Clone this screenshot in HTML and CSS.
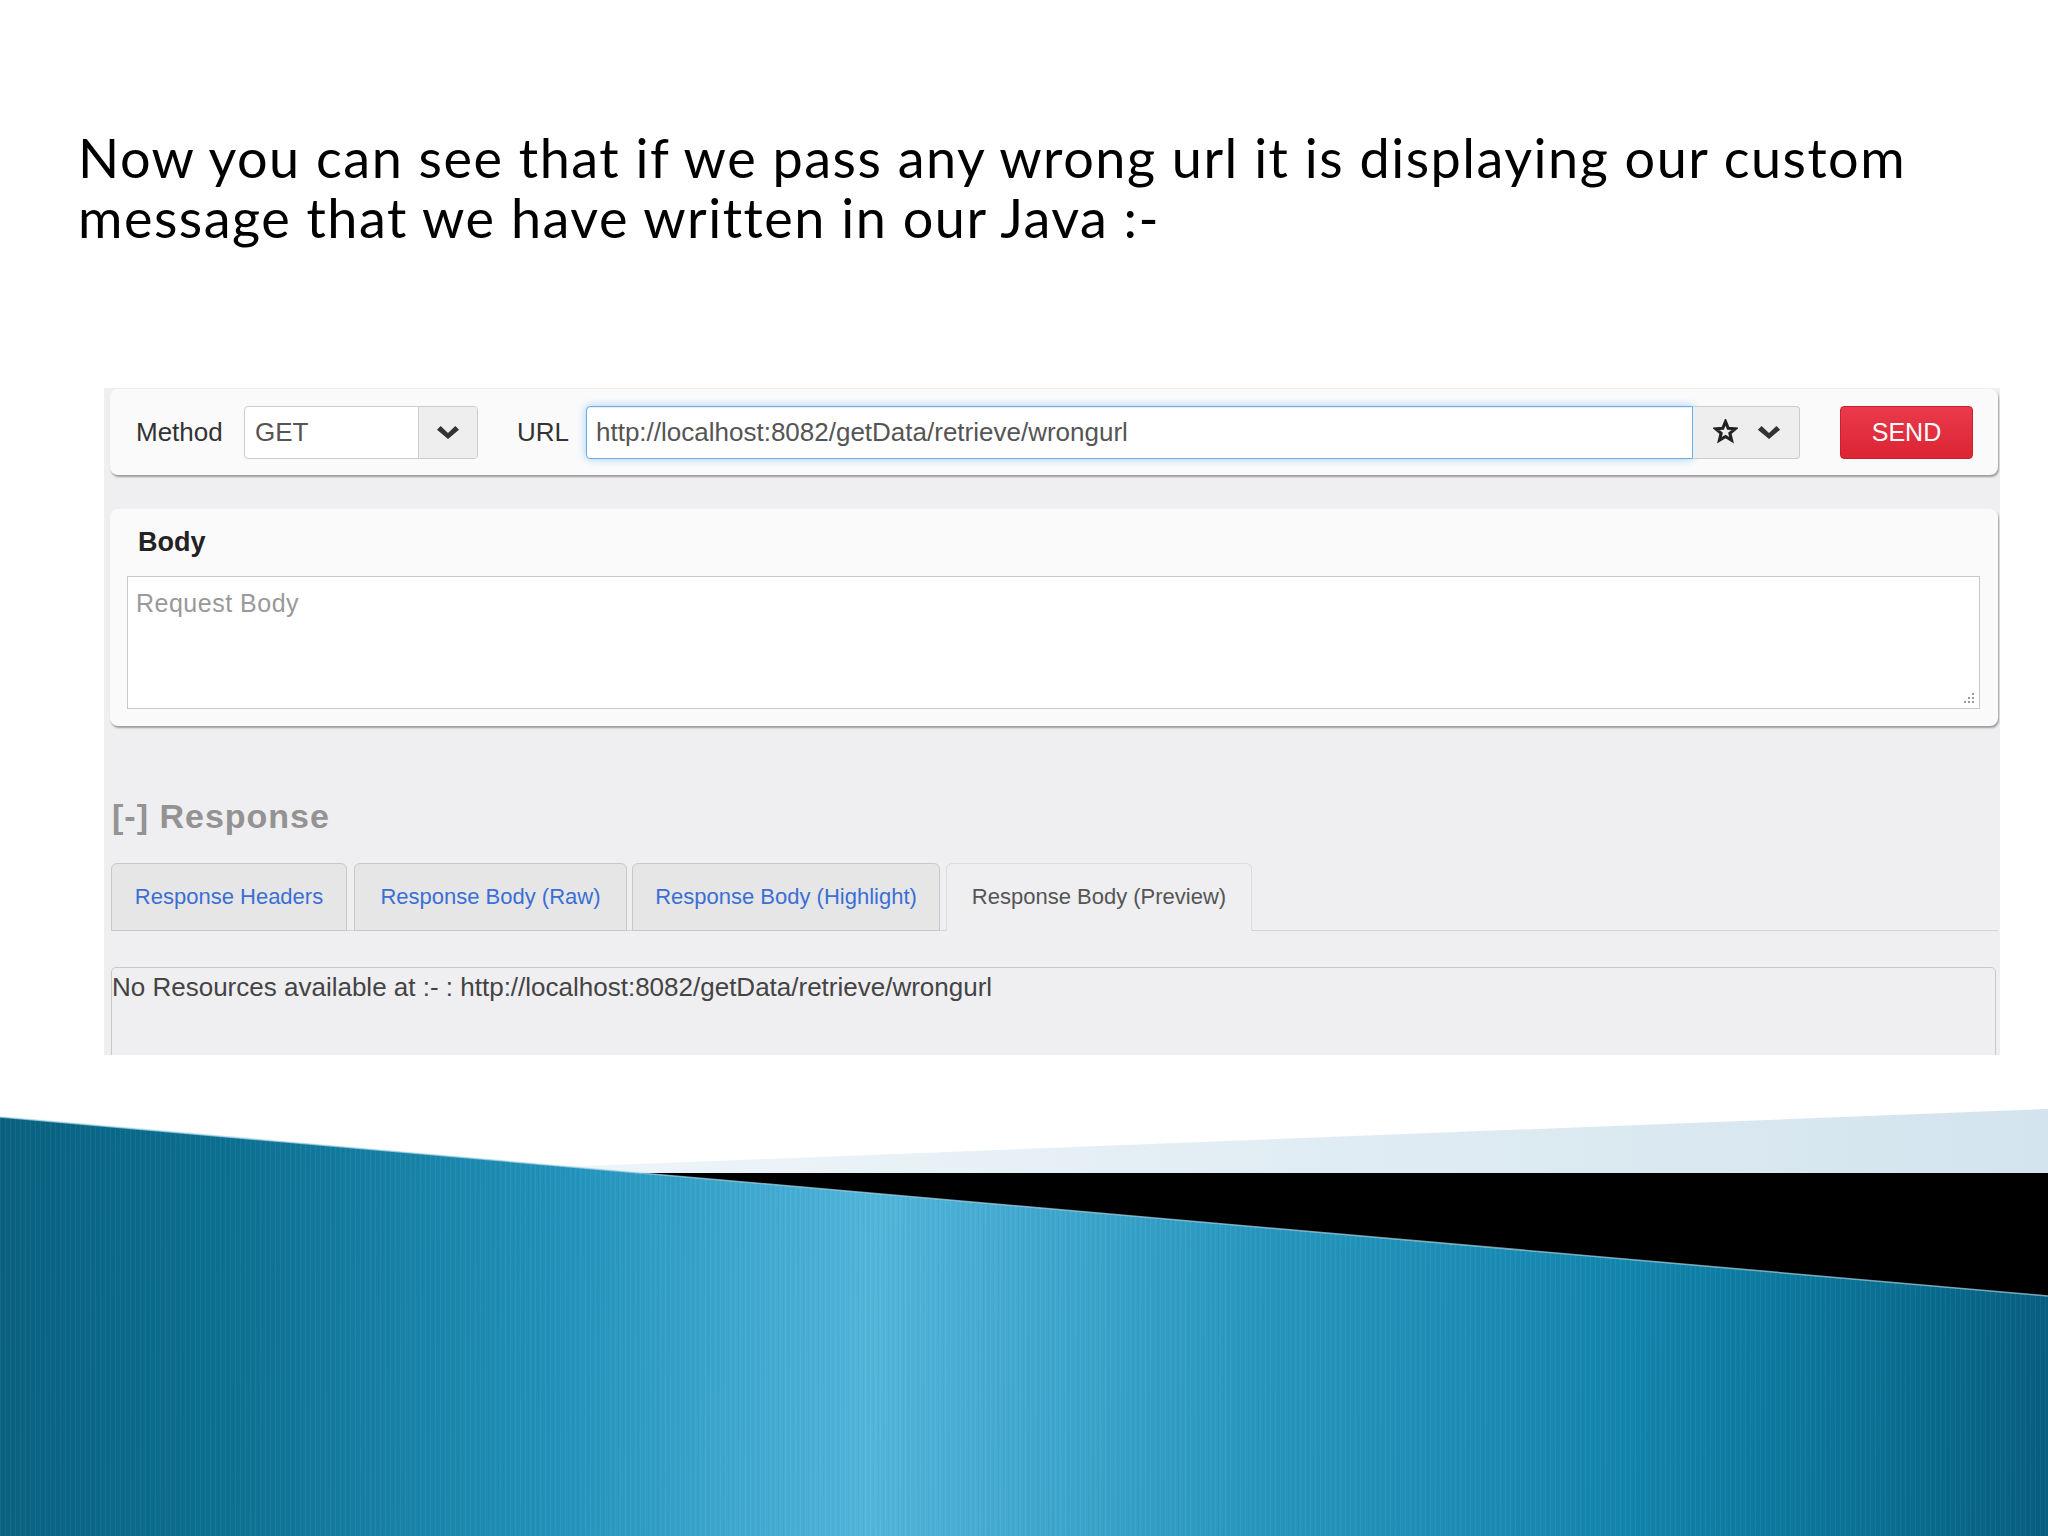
FILE: index.html
```html
<!DOCTYPE html>
<html>
<head>
<meta charset="utf-8">
<link rel="stylesheet" href="styles.css">
</head>
<body>
<div class="slide">
  <h1 class="title">Now you can see that if we pass any wrong url it is displaying our custom<br>message that we have written in our Java :-</h1>
  <div class="shot">
    <div class="card reqbar">
      <span class="lbl method">Method</span>
      <div class="select">
        <span class="val">GET</span>
        <span class="caret"><svg class="chev" width="22" height="13" viewBox="0 0 24 14"><polygon points="0,4 4,0 12,7.5 20,0 24,4 12,14" fill="#333"/></svg></span>
      </div>
      <span class="lbl url">URL</span>
      <div class="urlgroup">
        <div class="urlinput">http://localhost:8082/getData/retrieve/wrongurl</div>
        <div class="addon">
          <svg class="star" width="25" height="25" viewBox="0 0 24 24"><polygon points="12,2.6 14.6,8.9 21.4,9.4 16.2,13.8 17.8,20.4 12,16.8 6.2,20.4 7.8,13.8 2.6,9.4 9.4,8.9" fill="none" stroke="#222" stroke-width="3" stroke-linejoin="miter"/></svg>
          <svg class="chev2" width="24" height="13" viewBox="0 0 24 14"><polygon points="0,4 4,0 12,7.5 20,0 24,4 12,14" fill="#333"/></svg>
        </div>
      </div>
      <button class="send">SEND</button>
    </div>
    <div class="card bodycard">
      <div class="bodytitle">Body</div>
      <div class="textarea">
        <span class="ph">Request Body</span>
        <svg class="grip" width="12" height="12" viewBox="0 0 12 12"><g fill="#999"><rect x="9" y="1" width="2" height="2"/><rect x="9" y="5" width="2" height="2"/><rect x="5" y="5" width="2" height="2"/><rect x="9" y="9" width="2" height="2"/><rect x="5" y="9" width="2" height="2"/><rect x="1" y="9" width="2" height="2"/></g></svg>
      </div>
    </div>
    <h2 class="resp-h">[-] Response</h2>
    <div class="tabs">
      <div class="tab t1">Response Headers</div>
      <div class="tab t2">Response Body (Raw)</div>
      <div class="tab t3">Response Body (Highlight)</div>
      <div class="tab t4 active">Response Body (Preview)</div>
    </div>
    <div class="respbox">No Resources available at :- : http://localhost:8082/getData/retrieve/wrongurl</div>
  </div>
  <svg class="deco" width="2048" height="436" viewBox="0 0 2048 436">
    <defs>
      <linearGradient id="lb" x1="0" x2="1" y1="0" y2="0">
        <stop offset="0" stop-color="#eef5f9"/>
        <stop offset="1" stop-color="#d3e4ee"/>
      </linearGradient>
      <linearGradient id="bl" gradientUnits="userSpaceOnUse" x1="0" y1="0" x2="2048" y2="60">
        <stop offset="0" stop-color="#09617f"/>
        <stop offset="0.12" stop-color="#0d7193"/>
        <stop offset="0.28" stop-color="#2393bb"/>
        <stop offset="0.38" stop-color="#43abd1"/>
        <stop offset="0.43" stop-color="#52b5da"/>
        <stop offset="0.5" stop-color="#42a9cf"/>
        <stop offset="0.62" stop-color="#2796bd"/>
        <stop offset="0.8" stop-color="#1285ac"/>
        <stop offset="0.92" stop-color="#0a7094"/>
        <stop offset="1" stop-color="#075f80"/>
      </linearGradient>
      <pattern id="brush" width="5" height="20" patternUnits="userSpaceOnUse">
        <rect x="0" y="0" width="1" height="20" fill="#ffffff" opacity="0.05"/>
        <rect x="3" y="0" width="1" height="20" fill="#003040" opacity="0.04"/>
      </pattern>
    </defs>
    <polygon points="560,67 2048,9 2048,74 560,74" fill="url(#lb)"/>
    <polygon points="600,73 2048,73 2048,210 600,210" fill="#000"/>
    <polygon points="0,17 2048,196 2048,436 0,436" fill="url(#bl)"/>
    <polygon points="0,17 2048,196 2048,436 0,436" fill="url(#brush)"/>
    <line x1="0" y1="17" x2="2048" y2="196" stroke="#a8d8ea" stroke-width="1.5" opacity="0.7"/>
  </svg>
</div>
</body>
</html>
```
FILE: styles.css
```css
html, body {
  margin: 0;
  padding: 0;
  width: 2048px;
  height: 1536px;
  overflow: hidden;
  background: #ffffff;
}

.slide {
  width: 2048px;
  height: 1536px;
  overflow: hidden;
}

.title {
  margin: 0;
  padding: 128px 0 0 78px;
  font-family: Lato, "Open Sans", sans-serif;
  font-weight: 400;
  font-size: 54px;
  line-height: 60px;
  letter-spacing: 1.5px;
  color: #000;
  white-space: nowrap;
}

.shot {
  margin: 140px 0 0 104px;
  width: 1896px;
  height: 667px;
  box-sizing: border-box;
  padding: 1px 2px 0 6px;
  background: #efeef1;
  overflow: hidden;
  font-family: "Liberation Sans", Arial, sans-serif;
}

.card {
  background: #fafafb;
  border-radius: 8px;
  box-shadow: 1px 2px 2px rgba(0, 0, 0, 0.35);
}

.reqbar {
  display: flex;
  align-items: center;
  height: 86px;
  box-sizing: border-box;
  padding: 0 25px 0 26px;
}

.lbl {
  font-size: 26px;
  color: #333;
}

.method {
  width: 108px;
}

.select {
  width: 234px;
  height: 53px;
  box-sizing: border-box;
  border: 1px solid #ccc;
  border-radius: 4px;
  background: #fff;
  display: flex;
}

.select .val {
  flex: 1;
  padding-left: 10px;
  font-size: 26px;
  line-height: 51px;
  color: #555;
}

.select .caret {
  width: 58px;
  background: #eee;
  border-left: 1px solid #ccc;
  border-radius: 0 3px 3px 0;
  display: flex;
  align-items: center;
  justify-content: center;
}

.url {
  margin-left: 39px;
  width: 69px;
}

.urlgroup {
  display: flex;
  height: 53px;
}

.urlinput {
  width: 1107px;
  box-sizing: border-box;
  border: 1px solid #66afe9;
  border-radius: 4px 0 0 4px;
  box-shadow: 0 0 9px rgba(102, 175, 233, 0.6), inset 0 1px 1px rgba(0, 0, 0, 0.075);
  background: #fff;
  padding-left: 9px;
  font-size: 26px;
  line-height: 51px;
  color: #555;
}

.addon {
  width: 107px;
  box-sizing: border-box;
  border: 1px solid #ccc;
  border-left: 0;
  border-radius: 0 4px 4px 0;
  background: #eee;
  display: flex;
  align-items: center;
  padding-left: 20px;
}

.star {
  margin-top: -2px;
}

.chev2 {
  margin-left: 19px;
}

.send {
  margin-left: 40px;
  width: 133px;
  height: 53px;
  padding: 0;
  border: 1px solid #c91f2e;
  border-radius: 4px;
  background: linear-gradient(#e93a4b, #dc2434);
  color: #fff;
  font-family: "Liberation Sans", Arial, sans-serif;
  font-size: 25px;
}

.bodycard {
  margin-top: 34px;
  padding: 0 18px 17px 17px;
}

.bodytitle {
  height: 67px;
  line-height: 67px;
  padding-left: 11px;
  font-weight: 700;
  font-size: 27px;
  color: #222;
}

.textarea {
  position: relative;
  height: 133px;
  box-sizing: border-box;
  border: 1px solid #c8c8c8;
  background: #fff;
  padding: 11px 0 0 8px;
}

.ph {
  font-size: 25px;
  line-height: 30px;
  color: #999;
  letter-spacing: 0.5px;
}

.grip {
  position: absolute;
  right: 4px;
  bottom: 4px;
}

.resp-h {
  margin: 70px 0 0 2px;
  font-weight: 700;
  font-size: 34px;
  line-height: 40px;
  letter-spacing: 1px;
  color: #939393;
}

.tabs {
  display: flex;
  margin: 27px 0 0 1px;
  height: 68px;
  box-sizing: border-box;
  border-bottom: 1px solid #d3d3d3;
}

.tab {
  box-sizing: border-box;
  height: 68px;
  border: 1px solid #c8c8c8;
  border-radius: 6px 6px 0 0;
  background: #e6e6e7;
  font-size: 22px;
  color: #3b6fd6;
  display: flex;
  align-items: center;
  justify-content: center;
}

.t1 { width: 236px; }
.t2 { width: 273px; margin-left: 7px; }
.t3 { width: 308px; margin-left: 5px; }
.t4 { width: 306px; margin-left: 6px; }

.tab.active {
  background: #efeef1;
  border-color: #dcdcdc;
  border-bottom-color: #efeef1;
  color: #555;
}

.respbox {
  margin: 36px 2px 0 1px;
  height: 150px;
  box-sizing: border-box;
  border: 1px solid #c8c8c8;
  border-radius: 5px 5px 0 0;
  padding-top: 4px;
  font-size: 26px;
  line-height: 30px;
  color: #444;
}

.deco {
  display: block;
  margin-top: 45px;
}
```
